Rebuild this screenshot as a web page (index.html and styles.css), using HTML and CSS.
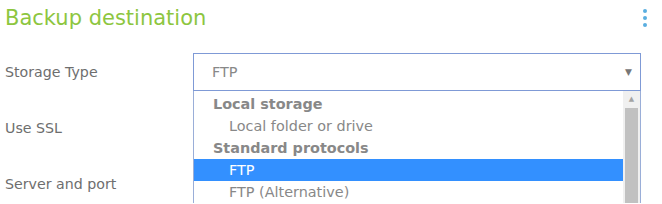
FILE: index.html
```html
<!DOCTYPE html>
<html lang="en">
<head>
  <meta charset="UTF-8">
  <title>Backup destination</title>
  <link rel="stylesheet" href="styles.css">
</head>
<body>

  <!-- Header -->
  <div class="header">
    <h1>Backup destination</h1>
    <div class="menu-dots">
      <span></span><span></span><span></span>
    </div>
  </div>

  <!-- Form -->
  <div class="form">
    <div class="row">
      <label>Storage Type</label>
      <div class="field">
        <div class="select">
          <span>FTP</span>
          <span class="arrow">&#9660;</span>
        </div>
        <div class="dropdown">
          <div class="options">
            <div class="group">Local storage</div>
            <div class="option">Local folder or drive</div>
            <div class="group">Standard protocols</div>
            <div class="option selected">FTP</div>
            <div class="option">FTP (Alternative)</div>
          </div>
          <div class="scrollbar">
            <div class="scroll-up">&#9650;</div>
            <div class="thumb"></div>
          </div>
        </div>
      </div>
    </div>
    <div class="row">
      <label>Use SSL</label>
    </div>
    <div class="row last">
      <label>Server and port</label>
    </div>
  </div>

</body>
</html>
```

FILE: styles.css
```css
body {
  margin: 0;
  padding: 0 5px;
  font-family: "DejaVu Sans", Verdana, sans-serif;
  color: #6e6e6e;
  background: #fff;
  overflow: hidden;
}

.header {
  display: flex;
  justify-content: space-between;
  align-items: center;
  height: 36px;
}

h1 {
  margin: 0;
  font-size: 21px;
  font-weight: normal;
  color: #8dc63f;
}

.menu-dots {
  display: flex;
  flex-direction: column;
  gap: 3px;
  margin-right: 10px;
}

.menu-dots span {
  width: 4px;
  height: 4px;
  border-radius: 50%;
  background: #5aaee0;
}

.form {
  padding-top: 17px;
}

.row {
  display: flex;
  height: 56px;
}

.row.last {
  height: 38px;
}

.row label {
  width: 188px;
  font-size: 14.2px;
  line-height: 38px;
}

.field {
  position: relative;
  width: 448px;
}

.select {
  display: flex;
  justify-content: space-between;
  align-items: center;
  height: 36px;
  padding: 0 8px 0 18px;
  border: 1px solid #7f9ad6;
  font-size: 14.4px;
  color: #888;
}

.arrow {
  font-size: 9px;
  color: #777;
}

.dropdown {
  position: absolute;
  top: 38px;
  left: 0;
  width: 446px;
  height: 113px;
  display: flex;
  background: #fff;
  border-left: 1px solid #9aaed8;
  border-right: 1px solid #9aaed8;
  z-index: 2;
}

.options {
  flex: 1;
  padding-top: 2px;
}

.group,
.option {
  height: 22px;
  line-height: 22px;
  font-size: 14.4px;
  color: #888;
}

.group {
  padding-left: 19px;
  font-weight: bold;
}

.option {
  padding-left: 35px;
}

.option.selected {
  background: #3390ff;
  color: #fff;
}

.scrollbar {
  width: 17px;
  background: #f0f0f0;
  display: flex;
  flex-direction: column;
  align-items: center;
}

.scroll-up {
  height: 17px;
  font-size: 7px;
  line-height: 17px;
  color: #a3a3a3;
}

.thumb {
  width: 13px;
  flex: 1;
  background: #c1c1c1;
}
```
